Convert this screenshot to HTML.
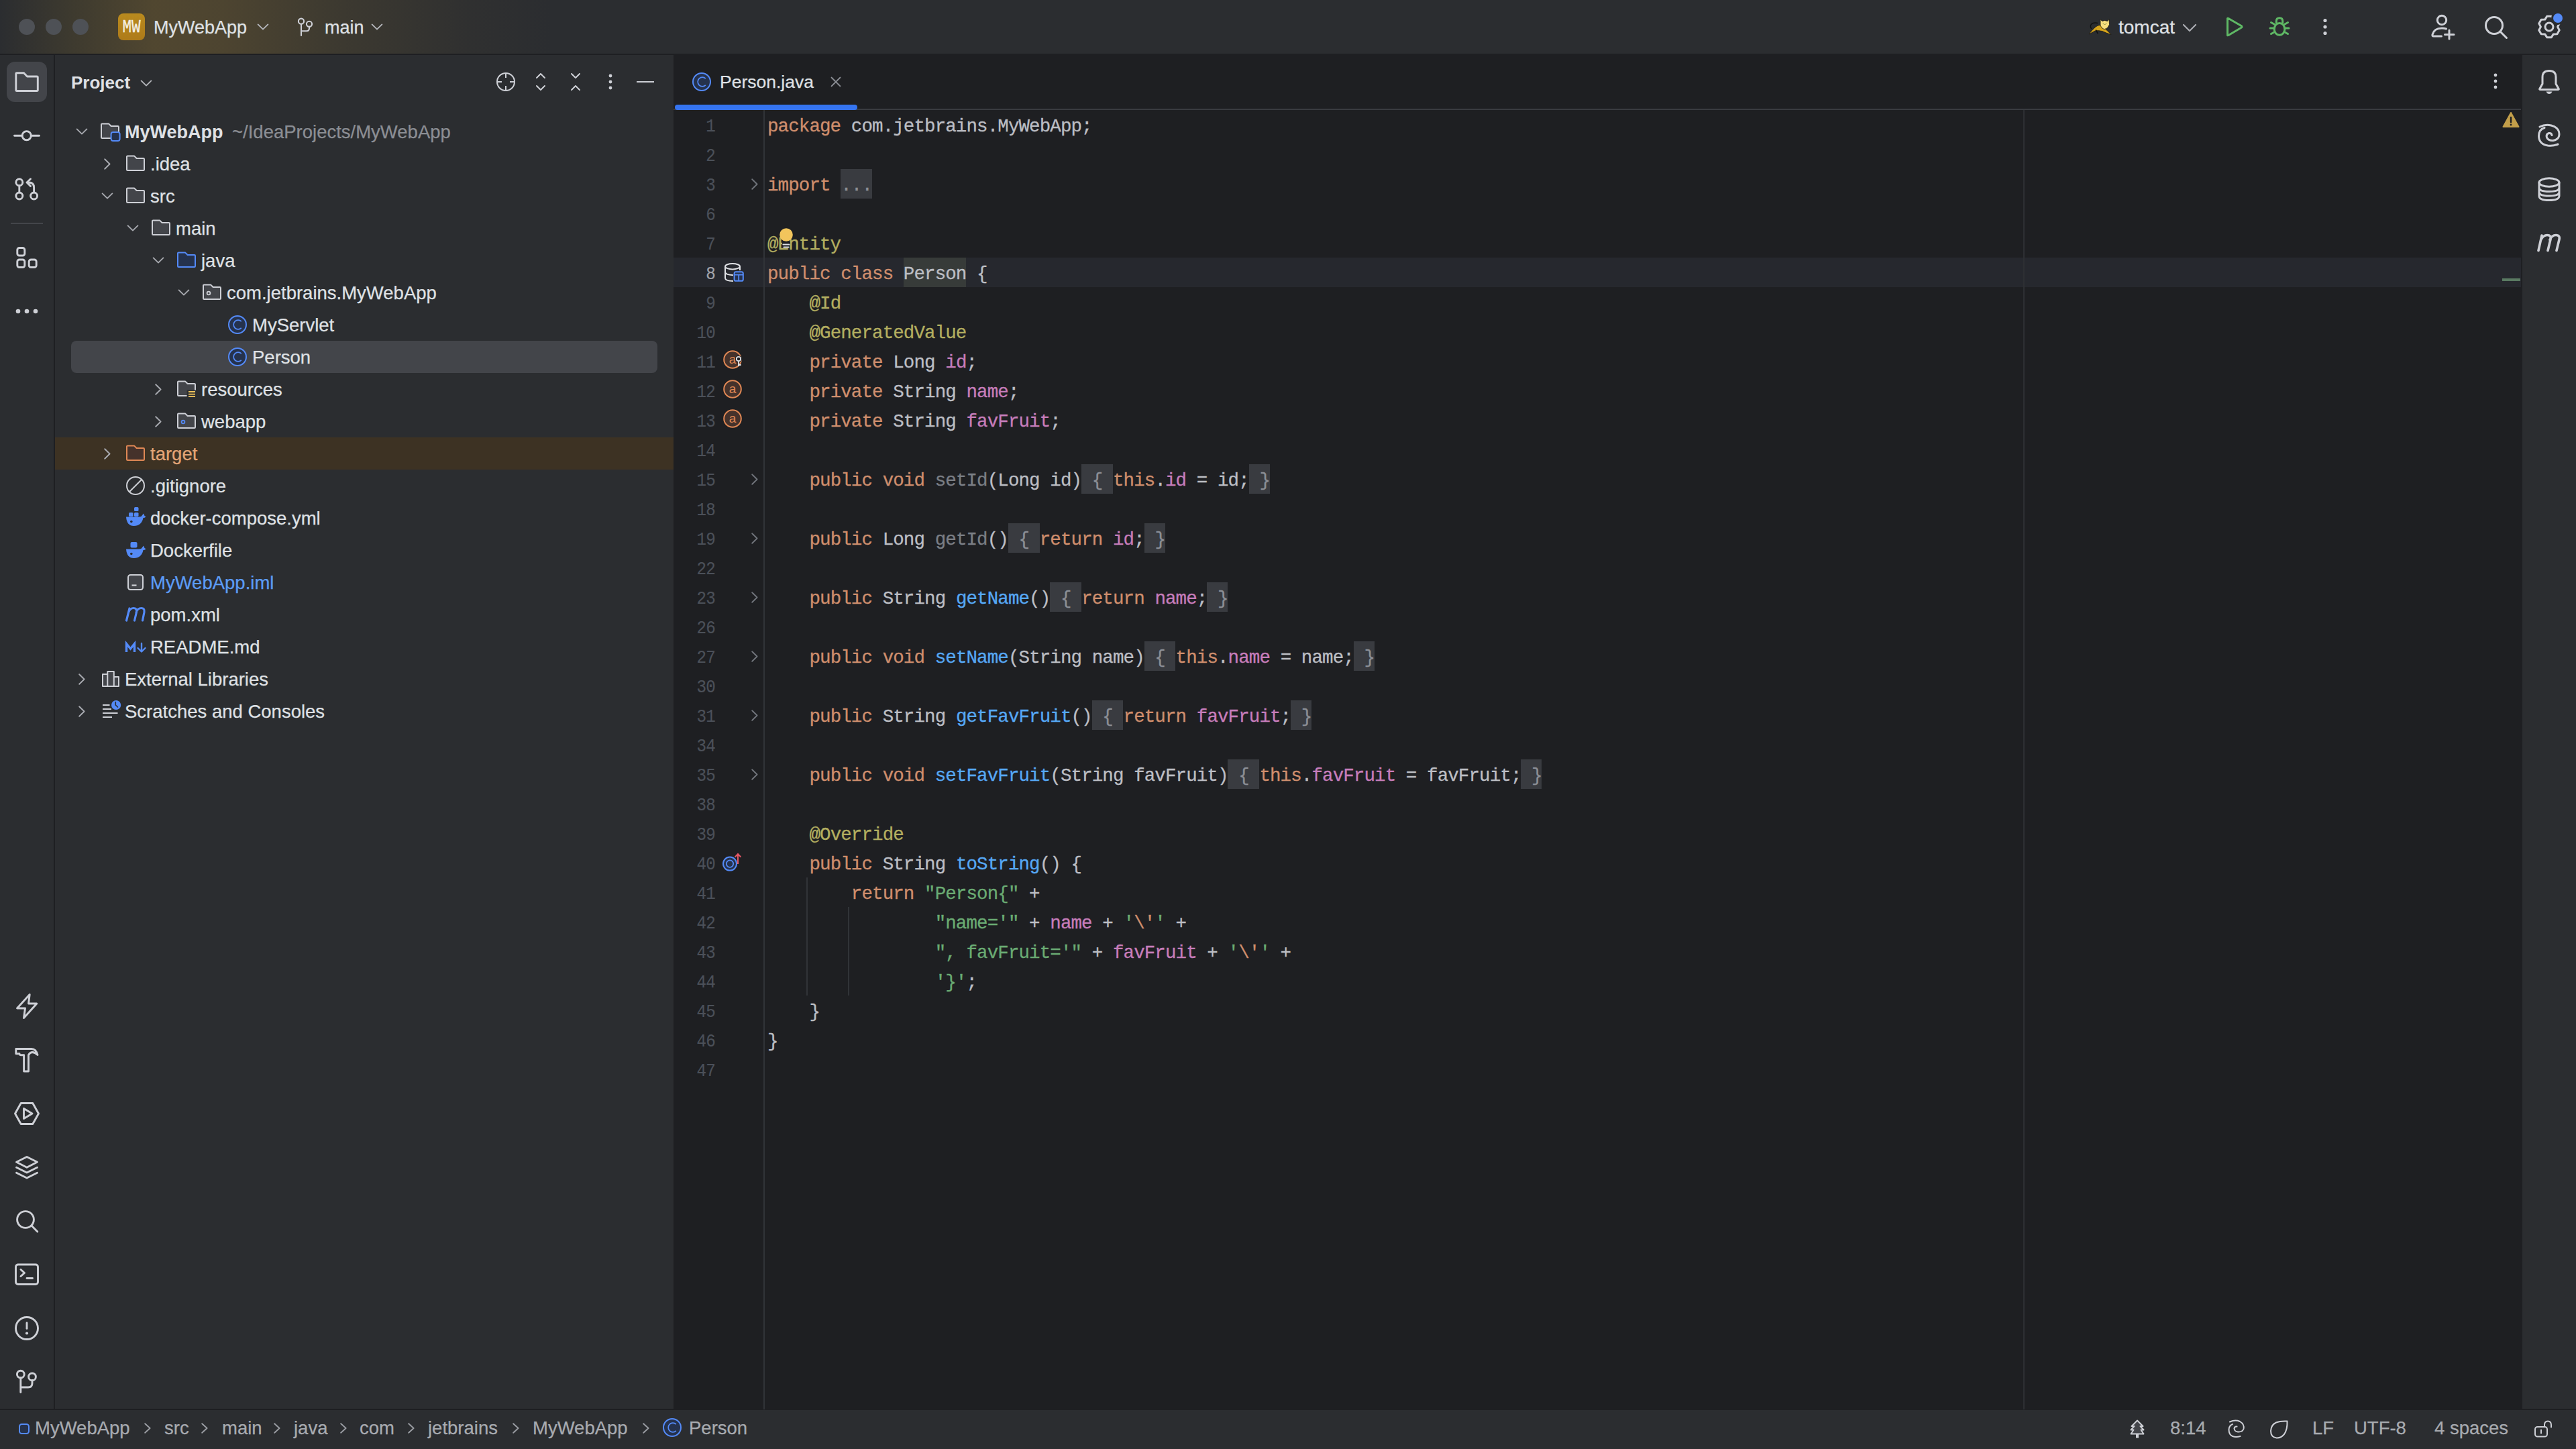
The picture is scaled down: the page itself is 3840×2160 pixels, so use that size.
<!DOCTYPE html><html><head><meta charset="utf-8"><style>
*{margin:0;padding:0;box-sizing:border-box}
html,body{width:3840px;height:2160px;overflow:hidden;background:#2b2d30;font-family:"Liberation Sans", sans-serif;color:#dfe1e5}
.abs{position:absolute}
#title{position:absolute;left:0;top:0;width:3840px;height:80px;background:#2b2d30;overflow:hidden}
#tb{position:absolute;left:0;top:80px;width:3840px;height:2px;background:#1e1f22}
#ltool{position:absolute;left:0;top:82px;width:80px;height:2019px;background:#2b2d30}
#lb{position:absolute;left:80px;top:82px;width:2px;height:2019px;background:#1e1f22}
#proj{position:absolute;left:82px;top:82px;width:922px;height:2019px;background:#2b2d30;overflow:hidden}
#editor{position:absolute;left:1004px;top:82px;width:2754px;height:2019px;background:#1e1f22;overflow:hidden}
#rb{position:absolute;left:3758px;top:82px;width:2px;height:2019px;background:#1e1f22}
#rtool{position:absolute;left:3760px;top:82px;width:80px;height:2019px;background:#2b2d30}
#status{position:absolute;left:0;top:2102px;width:3840px;height:58px;background:#2b2d30}
#sb{position:absolute;left:0;top:2100px;width:3840px;height:2px;background:#1e1f22}
.t{position:absolute;white-space:pre;font-size:27px;line-height:48px;height:48px;-webkit-text-stroke:0.25px currentColor}
.code{position:absolute;white-space:pre;font-family:"Liberation Mono", monospace;font-size:27.5px;letter-spacing:-0.9px;line-height:44px;height:44px;color:#bcbec4;-webkit-text-stroke:0.3px currentColor}
.ln{position:absolute;white-space:pre;font-family:"Liberation Mono", monospace;font-size:27.5px;letter-spacing:-0.9px;line-height:44px;height:44px;text-align:right;color:#4b5059;width:80px;transform:scaleX(0.88);transform-origin:100% 50%;-webkit-text-stroke:0.2px currentColor}
.kw{color:#cf8e6d} .an{color:#b3ae60} .fd{color:#c77dbb} .md{color:#56a8f5} .st{color:#6aab73} .gr{color:#7a7e85}
.fold{color:#8c8f96}
svg{position:absolute;overflow:visible}
</style></head><body><div id="title">
<div class="abs" style="left:0;top:0;width:1000px;height:80px;background:linear-gradient(90deg, rgba(43,45,48,0) 0px, rgba(90,78,45,0.4) 110px, rgba(100,84,48,0.66) 230px, rgba(100,84,48,0.6) 330px, rgba(90,78,48,0.38) 500px, rgba(80,70,48,0.12) 700px, rgba(43,45,48,0) 820px)"></div>
<div class="abs" style="left:28px;top:28px;width:24px;height:24px;border-radius:50%;background:#4e5156"></div>
<div class="abs" style="left:68px;top:28px;width:24px;height:24px;border-radius:50%;background:#4e5156"></div>
<div class="abs" style="left:108px;top:28px;width:24px;height:24px;border-radius:50%;background:#4e5156"></div>
<div class="abs" style="left:176px;top:20px;width:40px;height:40px;border-radius:8px;background:linear-gradient(180deg,#b98a1e,#ae7b1a)"></div>
<div class="abs" style="left:176px;top:20px;width:40px;height:40px;font-family:'Liberation Mono',monospace;font-size:27px;line-height:43px;text-align:center;color:#f4efe2;transform:scaleX(0.84);-webkit-text-stroke:0.3px #f4efe2">MW</div>
<div class="t" style="left:229px;top:17px;color:#dfe1e5">MyWebApp</div>
<svg style="left:383px;top:35px" width="18" height="10" viewBox="0 0 18 10" fill="none" ><path d="M1.6 1.4 L9 8.6 L16.4 1.4" stroke="#b4b6bb" stroke-width="1.9" stroke-linecap="round" stroke-linejoin="round"/></svg>
<svg style="left:436px;top:20px" width="40" height="40" viewBox="436 20 40 40" fill="none"><circle cx="449" cy="31.7" r="4.1" stroke="#ced0d6" stroke-width="2.1"/><circle cx="461" cy="35.8" r="4.1" stroke="#ced0d6" stroke-width="2.1"/><path d="M449 35.8 V53 M449 46.2 H457 Q461 46.2 461 42 V39.9" stroke="#ced0d6" stroke-width="2.1" stroke-linecap="round"/></svg>
<div class="t" style="left:484px;top:17px;color:#dfe1e5">main</div>
<svg style="left:553px;top:35px" width="18" height="10" viewBox="0 0 18 10" fill="none" ><path d="M1.6 1.4 L9 8.6 L16.4 1.4" stroke="#b4b6bb" stroke-width="1.9" stroke-linecap="round" stroke-linejoin="round"/></svg>
<svg style="left:3106px;top:20px" width="46" height="40" viewBox="3106 20 46 40" fill="none"><path d="M3127 34.5 Q3121 33 3117.5 36 Q3115 39.5 3117.8 43" stroke="#111" stroke-width="1.4" fill="none"/><path d="M3114 51 Q3118.5 44.5 3124 40 Q3128 37 3131 37.5 L3136 41 Q3141 45 3147 51.5 Q3140 49.5 3134 46.5 Q3127 45 3123 46 Q3118.5 48.5 3114 51 Z" fill="#d6a41c" stroke="#111" stroke-width="0.7" stroke-linejoin="round"/><path d="M3124.5 45 L3127 49.5" stroke="#111" stroke-width="1.6" stroke-linecap="round"/><path d="M3131 28.5 L3133.5 31.5 L3137.5 30.5 L3141.5 31.5 L3144 28.5 L3144.5 36.5 Q3142 43 3137.5 43.5 Q3133 43 3131 37.5 Z" fill="#f7df7e" stroke="#111" stroke-width="0.8" stroke-linejoin="round"/><path d="M3134.5 34.5 Q3137.5 38.5 3140.5 34.5" stroke="#6b7a3a" stroke-width="0.7" fill="none"/></svg>
<div class="t" style="left:3158px;top:17px;color:#dfe1e5;font-size:28px">tomcat</div>
<svg style="left:3250px;top:30px" width="30" height="20" viewBox="3250 30 30 20" fill="none"><path d="M3255 37 L3264 46 L3273 37" stroke="#a9abb0" stroke-width="2.2" stroke-linecap="round" stroke-linejoin="round"/></svg>
<svg style="left:3310px;top:20px" width="40" height="40" viewBox="3310 20 40 40" fill="none"><path d="M3320.5 28.5 Q3320 26.5 3322 27.5 L3341 38.5 Q3343 40 3341 41.3 L3322 52.5 Q3320 53.5 3320.5 51.5 Z" stroke="#5fb865" stroke-width="3" stroke-linecap="round" stroke-linejoin="round"/></svg>
<svg style="left:3378px;top:20px" width="40" height="40" viewBox="3378 20 40 40" fill="none"><ellipse cx="3398" cy="43.4" rx="7.8" ry="8.9" stroke="#5fb865" stroke-width="3"/><path d="M3393.3 34 V31.5 Q3393.3 26.7 3398 26.7 Q3402.7 26.7 3402.7 31.5 V34" stroke="#5fb865" stroke-width="3" stroke-linecap="round" stroke-linejoin="round"/><path d="M3385.5 33.5 L3390 36 M3410.5 33.5 L3406 36 M3384 42 H3389 M3412 42 H3407 M3385.5 50.5 L3390 48 M3410.5 50.5 L3406 48" stroke="#5fb865" stroke-width="3" stroke-linecap="round" stroke-linejoin="round"/></svg>
<svg style="left:3450px;top:20px" width="32" height="40" viewBox="3450 20 32 40" fill="none"><circle cx="3466" cy="30.5" r="2.6" fill="#ced0d6"/><circle cx="3466" cy="40" r="2.6" fill="#ced0d6"/><circle cx="3466" cy="49.5" r="2.6" fill="#ced0d6"/></svg>
<svg style="left:3620px;top:18px" width="46" height="46" viewBox="3620 18 46 46" fill="none"><circle cx="3640" cy="30" r="6.7" stroke="#ced0d6" stroke-width="3"/><path d="M3639.5 54 H3627.5 Q3625.5 54 3626 51.5 Q3628.5 42 3640 42 Q3644 42 3646.5 43" stroke="#ced0d6" stroke-width="3" stroke-linecap="round" stroke-linejoin="round"/><path d="M3651 45 V58 M3644.5 51.5 H3658" stroke="#ced0d6" stroke-width="3" stroke-linecap="round" stroke-linejoin="round"/></svg>
<svg style="left:3700px;top:20px" width="42" height="42" viewBox="3700 20 42 42" fill="none"><circle cx="3718" cy="38" r="12.5" stroke="#ced0d6" stroke-width="3"/><path d="M3727.5 47.5 L3736.5 56.5" stroke="#ced0d6" stroke-width="3" stroke-linecap="round" stroke-linejoin="round"/></svg>
<svg style="left:3776px;top:16px" width="48" height="48" viewBox="3776 16 48 48" fill="none"><path d="M3796.67 24.35 L3803.33 24.35 L3806.30 29.09 L3811.89 29.29 L3815.22 35.06 L3812.60 40.00 L3815.22 44.94 L3811.89 50.71 L3806.30 50.91 L3803.33 55.65 L3796.67 55.65 L3793.70 50.91 L3788.11 50.71 L3784.78 44.94 L3787.40 40.00 L3784.78 35.06 L3788.11 29.29 L3793.70 29.09 Z" stroke="#ced0d6" stroke-width="3" stroke-linecap="round" stroke-linejoin="round"/><circle cx="3800" cy="40" r="6" stroke="#ced0d6" stroke-width="3"/></svg>
<div class="abs" style="left:3806px;top:20px;width:14px;height:14px;border-radius:50%;background:#548af7;box-shadow:0 0 0 3px #2b2d30"></div>
</div>
<div id="tb"></div>
<div id="ltool">
<div class="abs" style="left:10px;top:10px;width:60px;height:60px;border-radius:12px;background:#43454a"></div>
</div><div id="lb"></div>
<svg style="left:16px;top:100px" width="48" height="44" viewBox="16 100 48 44" fill="none"><path d="M23.8 110 Q23.8 108.8 25 108.8 H35.5 L40.5 114 H55 Q56.3 114 56.3 115.3 V134.2 Q56.3 135.5 55 135.5 H25 Q23.8 135.5 23.8 134.2 Z" stroke="#ced0d6" stroke-width="2.9" stroke-linecap="round" stroke-linejoin="round"/></svg>
<svg style="left:16px;top:186px" width="48" height="32" viewBox="16 186 48 32" fill="none"><circle cx="39.7" cy="202.2" r="6.6" stroke="#ced0d6" stroke-width="2.9" stroke-linecap="round" stroke-linejoin="round"/><path d="M21.5 202.2 H33 M46.4 202.2 H58.5" stroke="#ced0d6" stroke-width="2.9" stroke-linecap="round" stroke-linejoin="round"/></svg>
<svg style="left:16px;top:258px" width="48" height="44" viewBox="16 258 48 44" fill="none"><circle cx="28.8" cy="271.8" r="5" stroke="#ced0d6" stroke-width="2.9" stroke-linecap="round" stroke-linejoin="round"/><circle cx="28.8" cy="292" r="5" stroke="#ced0d6" stroke-width="2.9" stroke-linecap="round" stroke-linejoin="round"/><circle cx="50.6" cy="292" r="5" stroke="#ced0d6" stroke-width="2.9" stroke-linecap="round" stroke-linejoin="round"/><path d="M28.8 276.8 V287 M50.6 287 V279.5 Q50.6 272 43 272 H40 M45.5 266.8 L40 272 L45.5 277.4" stroke="#ced0d6" stroke-width="2.9" stroke-linecap="round" stroke-linejoin="round"/></svg>
<div class="abs" style="left:16px;top:332px;width:48px;height:2px;background:#43454a"></div>
<svg style="left:16px;top:360px" width="48" height="48" viewBox="16 360 48 48" fill="none"><rect x="25.8" y="369.5" width="11" height="11.5" rx="3" stroke="#ced0d6" stroke-width="2.9" stroke-linecap="round" stroke-linejoin="round"/><rect x="25.8" y="387" width="11" height="11.5" rx="3" stroke="#ced0d6" stroke-width="2.9" stroke-linecap="round" stroke-linejoin="round"/><rect x="43.2" y="387" width="11" height="11.5" rx="3" stroke="#ced0d6" stroke-width="2.9" stroke-linecap="round" stroke-linejoin="round"/></svg>
<svg style="left:16px;top:450px" width="48" height="28" viewBox="16 450 48 28" fill="none"><circle cx="27" cy="464" r="3.3" fill="#ced0d6"/><circle cx="40" cy="464" r="3.3" fill="#ced0d6"/><circle cx="53" cy="464" r="3.3" fill="#ced0d6"/></svg>
<svg style="left:16px;top:1476px" width="48" height="48" viewBox="16 1476 48 48" fill="none"><path d="M44.2 1482.5 L25.5 1503 H37.5 L35.5 1517.5 L54.8 1496 H42.5 Z" stroke="#ced0d6" stroke-width="2.9" stroke-linecap="round" stroke-linejoin="round"/></svg>
<svg style="left:16px;top:1556px" width="48" height="48" viewBox="16 1556 48 48" fill="none"><path d="M23.8 1563.5 H47 Q53.5 1563.5 56 1572.5 Q52 1568.5 48 1568.5 Q44.5 1569 42.5 1572.8 V1597 H35.6 V1572.8 H31.5 Q29 1572.8 29 1570.8 H23.8 Z" stroke="#ced0d6" stroke-width="2.9" stroke-linecap="round" stroke-linejoin="round"/></svg>
<svg style="left:16px;top:1636px" width="48" height="48" viewBox="16 1636 48 48" fill="none"><path d="M31.2 1644.5 H48.8 L57.5 1660 L48.8 1675.5 H31.2 L22.5 1660 Z" stroke="#ced0d6" stroke-width="2.9" stroke-linecap="round" stroke-linejoin="round"/><path d="M35.5 1652.5 L48 1660 L35.5 1667.5 Z" stroke="#ced0d6" stroke-width="2.9" stroke-linecap="round" stroke-linejoin="round"/></svg>
<svg style="left:16px;top:1716px" width="48" height="48" viewBox="16 1716 48 48" fill="none"><path d="M40 1724.5 L55.5 1732.3 L40 1740.2 L24.5 1732.3 Z M24.5 1740.3 L40 1748 L55.5 1740.3 M24.5 1748.3 L40 1756 L55.5 1748.3" stroke="#ced0d6" stroke-width="2.9" stroke-linecap="round" stroke-linejoin="round"/></svg>
<svg style="left:16px;top:1796px" width="48" height="48" viewBox="16 1796 48 48" fill="none"><circle cx="38" cy="1818" r="12.4" stroke="#ced0d6" stroke-width="2.9" stroke-linecap="round" stroke-linejoin="round"/><path d="M47 1827 L55.8 1836" stroke="#ced0d6" stroke-width="2.9" stroke-linecap="round" stroke-linejoin="round"/></svg>
<svg style="left:16px;top:1876px" width="48" height="48" viewBox="16 1876 48 48" fill="none"><rect x="23.5" y="1885" width="33" height="29.5" rx="3.5" stroke="#ced0d6" stroke-width="2.9" stroke-linecap="round" stroke-linejoin="round"/><path d="M31 1892.5 L36.5 1897.5 L31 1902.5 M40 1905.5 H48.5" stroke="#ced0d6" stroke-width="2.9" stroke-linecap="round" stroke-linejoin="round"/></svg>
<svg style="left:16px;top:1956px" width="48" height="48" viewBox="16 1956 48 48" fill="none"><circle cx="40" cy="1980" r="16.5" stroke="#ced0d6" stroke-width="2.9" stroke-linecap="round" stroke-linejoin="round"/><path d="M40 1972 V1980.5" stroke="#ced0d6" stroke-width="2.9" stroke-linecap="round" stroke-linejoin="round"/><circle cx="40" cy="1987.5" r="2.1" fill="#ced0d6"/></svg>
<svg style="left:16px;top:2036px" width="48" height="48" viewBox="16 2036 48 48" fill="none"><circle cx="30.8" cy="2048.6" r="5.4" stroke="#ced0d6" stroke-width="2.9" stroke-linecap="round" stroke-linejoin="round"/><circle cx="48" cy="2052.4" r="5.4" stroke="#ced0d6" stroke-width="2.9" stroke-linecap="round" stroke-linejoin="round"/><path d="M30.8 2054 V2075.5 M30.8 2068 H42 Q48 2068 48 2062 V2057.8" stroke="#ced0d6" stroke-width="2.9" stroke-linecap="round" stroke-linejoin="round"/></svg>
<div id="proj">
</div>
<div class="t" style="left:106px;top:99px;font-weight:bold;font-size:26px;-webkit-text-stroke:0">Project</div>
<svg style="left:209px;top:119px" width="18" height="10" viewBox="0 0 18 10" fill="none" ><path d="M1.6 1.4 L9 8.6 L16.4 1.4" stroke="#b4b6bb" stroke-width="1.9" stroke-linecap="round" stroke-linejoin="round"/></svg>
<svg style="left:738px;top:106px" width="32" height="32" viewBox="0 0 16.0 16.0" fill="none" ><circle cx="8" cy="8" r="6.5" stroke="#ced0d6" stroke-width="1"/><path d="M8 1.5 V5 M8 11 V14.5 M1.5 8 H5 M11 8 H14.5" stroke="#ced0d6" stroke-width="1"/></svg>
<svg style="left:790px;top:106px" width="32" height="32" viewBox="0 0 16.0 16.0" fill="none" ><path d="M5 5 L8 2 L11 5 M5 11 L8 14 L11 11" stroke="#ced0d6" stroke-width="1" stroke-linecap="round" stroke-linejoin="round"/></svg>
<svg style="left:842px;top:106px" width="32" height="32" viewBox="0 0 16.0 16.0" fill="none" ><path d="M5 2 L8 5 L11 2 M5 14 L8 11 L11 14" stroke="#ced0d6" stroke-width="1" stroke-linecap="round" stroke-linejoin="round"/></svg>
<svg style="left:894px;top:106px" width="32" height="32" viewBox="0 0 16.0 16.0" fill="none" ><circle cx="8" cy="3.5" r="1.2" fill="#ced0d6"/><circle cx="8" cy="8" r="1.2" fill="#ced0d6"/><circle cx="8" cy="12.5" r="1.2" fill="#ced0d6"/></svg>
<div class="abs" style="left:949px;top:121px;width:26px;height:2px;background:#ced0d6"></div>
<div class="abs" style="left:106px;top:508px;width:874px;height:48px;border-radius:8px;background:#43454a"></div>
<div class="abs" style="left:82px;top:652px;width:922px;height:48px;background:#3d3223"></div>
<svg style="left:113px;top:191px" width="18" height="10" viewBox="0 0 18 10" fill="none" ><path d="M1.6 1.4 L9 8.6 L16.4 1.4" stroke="#a8aab0" stroke-width="1.9" stroke-linecap="round" stroke-linejoin="round"/></svg>
<svg style="left:148px;top:180px" width="32" height="32" viewBox="0 0 16.0 16.0" fill="none" ><path d="M1.5 2.8 Q1.5 2.2 2.1 2.2 H7 L8.8 4 H13.9 Q14.5 4 14.5 4.6 V12.4 Q14.5 13 13.9 13 H2.1 Q1.5 13 1.5 12.4 Z" stroke="#ced0d6" fill="#43454a" stroke-width="1" stroke-linejoin="round"/><rect x="8.8" y="8.5" width="6.5" height="6.5" rx="1.5" fill="#25324d" stroke="#548af7" stroke-width="1"/></svg>
<div class="t" style="left:186px;top:173px;font-weight:bold;color:#dfe1e5;-webkit-text-stroke:0">MyWebApp <span style="font-weight:normal;color:#8b8e94;font-size:27.5px;margin-left:6px;-webkit-text-stroke:0.25px currentColor">~/IdeaProjects/MyWebApp</span></div>
<svg style="left:155px;top:236px" width="10" height="17" viewBox="0 0 10 17" fill="none" ><path d="M1.2 1.2 L8.6 8.5 L1.2 15.8" stroke="#a8aab0" stroke-width="1.9" stroke-linecap="round" stroke-linejoin="round"/></svg>
<svg style="left:186px;top:228px" width="32" height="32" viewBox="0 0 16.0 16.0" fill="none" ><path d="M1.5 2.8 Q1.5 2.2 2.1 2.2 H7 L8.8 4 H13.9 Q14.5 4 14.5 4.6 V12.4 Q14.5 13 13.9 13 H2.1 Q1.5 13 1.5 12.4 Z" stroke="#ced0d6" fill="#43454a" stroke-width="1" stroke-linejoin="round"/></svg>
<div class="t" style="left:224px;top:221px;color:#dfe1e5;font-size:27.5px">.idea</div>
<svg style="left:151px;top:287px" width="18" height="10" viewBox="0 0 18 10" fill="none" ><path d="M1.6 1.4 L9 8.6 L16.4 1.4" stroke="#a8aab0" stroke-width="1.9" stroke-linecap="round" stroke-linejoin="round"/></svg>
<svg style="left:186px;top:276px" width="32" height="32" viewBox="0 0 16.0 16.0" fill="none" ><path d="M1.5 2.8 Q1.5 2.2 2.1 2.2 H7 L8.8 4 H13.9 Q14.5 4 14.5 4.6 V12.4 Q14.5 13 13.9 13 H2.1 Q1.5 13 1.5 12.4 Z" stroke="#ced0d6" fill="#43454a" stroke-width="1" stroke-linejoin="round"/></svg>
<div class="t" style="left:224px;top:269px;color:#dfe1e5;font-size:27.5px">src</div>
<svg style="left:189px;top:335px" width="18" height="10" viewBox="0 0 18 10" fill="none" ><path d="M1.6 1.4 L9 8.6 L16.4 1.4" stroke="#a8aab0" stroke-width="1.9" stroke-linecap="round" stroke-linejoin="round"/></svg>
<svg style="left:224px;top:324px" width="32" height="32" viewBox="0 0 16.0 16.0" fill="none" ><path d="M1.5 2.8 Q1.5 2.2 2.1 2.2 H7 L8.8 4 H13.9 Q14.5 4 14.5 4.6 V12.4 Q14.5 13 13.9 13 H2.1 Q1.5 13 1.5 12.4 Z" stroke="#ced0d6" fill="#43454a" stroke-width="1" stroke-linejoin="round"/></svg>
<div class="t" style="left:262px;top:317px;color:#dfe1e5;font-size:27.5px">main</div>
<svg style="left:227px;top:383px" width="18" height="10" viewBox="0 0 18 10" fill="none" ><path d="M1.6 1.4 L9 8.6 L16.4 1.4" stroke="#a8aab0" stroke-width="1.9" stroke-linecap="round" stroke-linejoin="round"/></svg>
<svg style="left:262px;top:372px" width="32" height="32" viewBox="0 0 16.0 16.0" fill="none" ><path d="M1.5 2.8 Q1.5 2.2 2.1 2.2 H7 L8.8 4 H13.9 Q14.5 4 14.5 4.6 V12.4 Q14.5 13 13.9 13 H2.1 Q1.5 13 1.5 12.4 Z" stroke="#548af7" fill="#25324d" stroke-width="1" stroke-linejoin="round"/></svg>
<div class="t" style="left:300px;top:365px;color:#dfe1e5;font-size:27.5px">java</div>
<svg style="left:265px;top:431px" width="18" height="10" viewBox="0 0 18 10" fill="none" ><path d="M1.6 1.4 L9 8.6 L16.4 1.4" stroke="#a8aab0" stroke-width="1.9" stroke-linecap="round" stroke-linejoin="round"/></svg>
<svg style="left:300px;top:420px" width="32" height="32" viewBox="0 0 16.0 16.0" fill="none" ><path d="M1.5 2.8 Q1.5 2.2 2.1 2.2 H7 L8.8 4 H13.9 Q14.5 4 14.5 4.6 V12.4 Q14.5 13 13.9 13 H2.1 Q1.5 13 1.5 12.4 Z" stroke="#ced0d6" fill="#43454a" stroke-width="1" stroke-linejoin="round"/><circle cx="5.5" cy="8.5" r="1.2" stroke="#ced0d6" stroke-width="0.9"/></svg>
<div class="t" style="left:338px;top:413px;color:#dfe1e5;font-size:27.5px">com.jetbrains.MyWebApp</div>
<svg style="left:338px;top:468px" width="32" height="32" viewBox="0 0 16.0 16.0" fill="none" ><circle cx="8" cy="8" r="6.5" stroke="#548af7" fill="#25324d" stroke-width="1"/><path d="M10.9 5.6 A3.4 3.4 0 1 0 10.9 10.4" stroke="#548af7" stroke-width="0.85" fill="none"/></svg>
<div class="t" style="left:376px;top:461px;color:#dfe1e5;font-size:27.5px">MyServlet</div>
<svg style="left:338px;top:516px" width="32" height="32" viewBox="0 0 16.0 16.0" fill="none" ><circle cx="8" cy="8" r="6.5" stroke="#548af7" fill="#25324d" stroke-width="1"/><path d="M10.9 5.6 A3.4 3.4 0 1 0 10.9 10.4" stroke="#548af7" stroke-width="0.85" fill="none"/></svg>
<div class="t" style="left:376px;top:509px;color:#dfe1e5;font-size:27.5px">Person</div>
<svg style="left:231px;top:572px" width="10" height="17" viewBox="0 0 10 17" fill="none" ><path d="M1.2 1.2 L8.6 8.5 L1.2 15.8" stroke="#a8aab0" stroke-width="1.9" stroke-linecap="round" stroke-linejoin="round"/></svg>
<svg style="left:262px;top:564px" width="32" height="32" viewBox="0 0 16.0 16.0" fill="none" ><path d="M1.5 2.8 Q1.5 2.2 2.1 2.2 H7 L8.8 4 H13.9 Q14.5 4 14.5 4.6 V12.4 Q14.5 13 13.9 13 H2.1 Q1.5 13 1.5 12.4 Z" stroke="#ced0d6" fill="#43454a" stroke-width="1" stroke-linejoin="round"/><rect x="8.3" y="8.8" width="7" height="6.2" fill="#2b2d30"/><path d="M9.5 10 H14.5 M9.5 11.8 H14.5 M9.5 13.6 H14.5" stroke="#f2c55c" stroke-width="0.9"/></svg>
<div class="t" style="left:300px;top:557px;color:#dfe1e5;font-size:27.5px">resources</div>
<svg style="left:231px;top:620px" width="10" height="17" viewBox="0 0 10 17" fill="none" ><path d="M1.2 1.2 L8.6 8.5 L1.2 15.8" stroke="#a8aab0" stroke-width="1.9" stroke-linecap="round" stroke-linejoin="round"/></svg>
<svg style="left:262px;top:612px" width="32" height="32" viewBox="0 0 16.0 16.0" fill="none" ><path d="M1.5 2.8 Q1.5 2.2 2.1 2.2 H7 L8.8 4 H13.9 Q14.5 4 14.5 4.6 V12.4 Q14.5 13 13.9 13 H2.1 Q1.5 13 1.5 12.4 Z" stroke="#ced0d6" fill="#43454a" stroke-width="1" stroke-linejoin="round"/><circle cx="5.5" cy="8.5" r="1.2" stroke="#548af7" stroke-width="0.9"/></svg>
<div class="t" style="left:300px;top:605px;color:#dfe1e5;font-size:27.5px">webapp</div>
<svg style="left:155px;top:668px" width="10" height="17" viewBox="0 0 10 17" fill="none" ><path d="M1.2 1.2 L8.6 8.5 L1.2 15.8" stroke="#a8aab0" stroke-width="1.9" stroke-linecap="round" stroke-linejoin="round"/></svg>
<svg style="left:186px;top:660px" width="32" height="32" viewBox="0 0 16.0 16.0" fill="none" ><path d="M1.5 2.8 Q1.5 2.2 2.1 2.2 H7 L8.8 4 H13.9 Q14.5 4 14.5 4.6 V12.4 Q14.5 13 13.9 13 H2.1 Q1.5 13 1.5 12.4 Z" stroke="#e08855" fill="#45322b" stroke-width="1" stroke-linejoin="round"/></svg>
<div class="t" style="left:224px;top:653px;color:#e3a577;font-size:27.5px">target</div>
<svg style="left:186px;top:708px" width="32" height="32" viewBox="0 0 16.0 16.0" fill="none" ><circle cx="8" cy="8" r="6.5" stroke="#ced0d6" stroke-width="1"/><path d="M3.5 12.5 L12.5 3.5" stroke="#ced0d6" stroke-width="1"/></svg>
<div class="t" style="left:224px;top:701px;color:#dfe1e5;font-size:27.5px">.gitignore</div>
<svg style="left:184px;top:752px" width="40" height="40" viewBox="184 752 40 40" fill="none"><rect x="200" y="756.0" width="6.5" height="6" rx="1.5" fill="#548af7"/><rect x="192" y="764.0" width="6.5" height="6" rx="1.5" fill="#548af7"/><rect x="200" y="764.0" width="6.5" height="6" rx="1.5" fill="#548af7"/><path d="M188 770.5 H207 Q211 770.5 212 768 L214 765.5 L215.5 769 Q217 769.5 217.5 770.5 Q215.5 772 213.5 772 Q211 784 199.5 784 Q189 784 188 770.5 Z" fill="#548af7"/><circle cx="195.8" cy="777.5" r="1.8" fill="#2b2d30"/></svg>
<div class="t" style="left:224px;top:749px;color:#dfe1e5;font-size:27.5px">docker-compose.yml</div>
<svg style="left:184px;top:800px" width="40" height="40" viewBox="184 800 40 40" fill="none"><rect x="194.5" y="808.0" width="10" height="8.5" rx="2" fill="#548af7"/><path d="M188 818.5 H207 Q211 818.5 212 816 L214 813.5 L215.5 817 Q217 817.5 217.5 818.5 Q215.5 820 213.5 820 Q211 832 199.5 832 Q189 832 188 818.5 Z" fill="#548af7"/><circle cx="195.8" cy="825.5" r="1.8" fill="#2b2d30"/></svg>
<div class="t" style="left:224px;top:797px;color:#dfe1e5;font-size:27.5px">Dockerfile</div>
<svg style="left:184px;top:848px" width="40" height="40" viewBox="184 848 40 40" fill="none"><rect x="191" y="857" width="22" height="22" rx="3.5" fill="#43454a" stroke="#ced0d6" stroke-width="2"/><path d="M196.5 872.5 H203.5" stroke="#ced0d6" stroke-width="2.2"/></svg>
<div class="t" style="left:224px;top:845px;color:#5c9cf6;font-size:27.5px">MyWebApp.iml</div>
<svg style="left:184px;top:900px" width="40" height="32" viewBox="184 900 40 32" fill="none"><path d="M188.5 925 L193 907 M191.5 913 Q194 906.5 199 906.5 Q204.5 906.5 203.5 912.5 L200.5 925 M203 912.5 Q205.5 906.5 210.5 906.5 Q216 906.5 215 912.5 L212.5 925" stroke="#548af7" stroke-width="3.2" stroke-linecap="round" stroke-linejoin="round"/></svg>
<div class="t" style="left:224px;top:893px;color:#dfe1e5;font-size:27.5px">pom.xml</div>
<svg style="left:184px;top:948px" width="40" height="32" viewBox="184 948 40 32" fill="none"><path d="M188.5 972 V959.5 L194.5 967 L200.5 959.5 V972" stroke="#548af7" stroke-width="3.4" stroke-linejoin="miter"/><path d="M211 959 V971 M205.5 966 L211 971.5 L216.5 966" stroke="#548af7" stroke-width="2.4" stroke-linecap="round" stroke-linejoin="round"/></svg>
<div class="t" style="left:224px;top:941px;color:#dfe1e5;font-size:27.5px">README.md</div>
<svg style="left:117px;top:1004px" width="10" height="17" viewBox="0 0 10 17" fill="none" ><path d="M1.2 1.2 L8.6 8.5 L1.2 15.8" stroke="#a8aab0" stroke-width="1.9" stroke-linecap="round" stroke-linejoin="round"/></svg>
<svg style="left:144px;top:996px" width="40" height="32" viewBox="144 996 40 32" fill="none"><path d="M153 1023 V1005 H160.3 V1023 Z M160.3 1023 V1001 H169.8 V1023 Z M169.8 1023 V1009 H177 V1023 Z" fill="#43454a" stroke="#ced0d6" stroke-width="2" stroke-linejoin="round"/></svg>
<div class="t" style="left:186px;top:989px;color:#dfe1e5;font-size:27.5px">External Libraries</div>
<svg style="left:117px;top:1052px" width="10" height="17" viewBox="0 0 10 17" fill="none" ><path d="M1.2 1.2 L8.6 8.5 L1.2 15.8" stroke="#a8aab0" stroke-width="1.9" stroke-linecap="round" stroke-linejoin="round"/></svg>
<svg style="left:144px;top:1040px" width="40" height="40" viewBox="144 1040 40 40" fill="none"><path d="M153 1051 H163.5 M153 1057 H166 M153 1063 H175.5 M153 1069 H167" stroke="#ced0d6" stroke-width="2.2"/><circle cx="173.1" cy="1051" r="8.2" fill="#2b2d30"/><circle cx="173.1" cy="1051" r="7.1" fill="#548af7"/><path d="M172.3 1046.5 V1051 L175.5 1054" stroke="#2b2d30" stroke-width="1.6" stroke-linecap="round"/></svg>
<div class="t" style="left:186px;top:1037px;color:#dfe1e5;font-size:27.5px">Scratches and Consoles</div>
<div id="editor"></div><div id="rb"></div><div id="rtool"></div><div id="sb"></div>
<svg style="left:1030px;top:106px" width="32" height="32" viewBox="0 0 16.0 16.0" fill="none" ><circle cx="8" cy="8" r="6.5" stroke="#548af7" fill="#25324d" stroke-width="1"/><path d="M10.9 5.6 A3.4 3.4 0 1 0 10.9 10.4" stroke="#548af7" stroke-width="0.85" fill="none"/></svg>
<div class="t" style="left:1073px;top:98px;font-size:26.5px;color:#dfe1e5">Person.java</div>
<svg style="left:1237px;top:113px" width="18" height="18" viewBox="0 0 18 18" fill="none" ><path d="M2.6 2.6 L15.4 15.4 M15.4 2.6 L2.6 15.4" stroke="#8c8f96" stroke-width="2" stroke-linecap="round"/></svg>
<div class="abs" style="left:1004px;top:162px;width:2754px;height:2px;background:#393b40"></div>
<div class="abs" style="left:1006px;top:156px;width:272px;height:8px;border-radius:4px;background:#3574f0"></div>
<svg style="left:3704px;top:105px" width="32" height="32" viewBox="0 0 16.0 16.0" fill="none" ><circle cx="8" cy="3.5" r="1.2" fill="#ced0d6"/><circle cx="8" cy="8" r="1.2" fill="#ced0d6"/><circle cx="8" cy="12.5" r="1.2" fill="#ced0d6"/></svg>
<div class="abs" style="left:1004px;top:384px;width:2754px;height:44px;background:#26282e"></div>
<div class="abs" style="left:1138px;top:164px;width:2px;height:1937px;background:#313438"></div>
<div class="abs" style="left:3016px;top:164px;width:2px;height:1937px;background:#2d2f33"></div>
<div class="ln" style="left:986px;top:167px;color:#4b5059">1</div>
<div class="code" style="left:1144px;top:167px"><span class="kw">package</span> com.jetbrains.MyWebApp;</div>
<div class="ln" style="left:986px;top:211px;color:#4b5059">2</div>
<div class="code" style="left:1144px;top:211px"></div>
<div class="ln" style="left:986px;top:255px;color:#4b5059">3</div>
<div class="abs" style="left:1253.2px;top:252px;width:46.8px;height:44px;background:#393b40"></div>
<div class="code" style="left:1144px;top:255px"><span class="kw">import</span> <span class="fold">...</span></div>
<div class="ln" style="left:986px;top:299px;color:#4b5059">6</div>
<div class="code" style="left:1144px;top:299px"></div>
<div class="ln" style="left:986px;top:343px;color:#4b5059">7</div>
<div class="code" style="left:1144px;top:343px"><span class="an">@Entity</span></div>
<div class="ln" style="left:986px;top:387px;color:#a1a3ab">8</div>
<div class="abs" style="left:1346.8px;top:384px;width:93.6px;height:44px;background:#373b39"></div>
<div class="code" style="left:1144px;top:387px"><span class="kw">public</span> <span class="kw">class</span> Person {</div>
<div class="ln" style="left:986px;top:431px;color:#4b5059">9</div>
<div class="code" style="left:1144px;top:431px">    <span class="an">@Id</span></div>
<div class="ln" style="left:986px;top:475px;color:#4b5059">10</div>
<div class="code" style="left:1144px;top:475px">    <span class="an">@GeneratedValue</span></div>
<div class="ln" style="left:986px;top:519px;color:#4b5059">11</div>
<div class="code" style="left:1144px;top:519px">    <span class="kw">private</span> Long <span class="fd">id</span>;</div>
<div class="ln" style="left:986px;top:563px;color:#4b5059">12</div>
<div class="code" style="left:1144px;top:563px">    <span class="kw">private</span> String <span class="fd">name</span>;</div>
<div class="ln" style="left:986px;top:607px;color:#4b5059">13</div>
<div class="code" style="left:1144px;top:607px">    <span class="kw">private</span> String <span class="fd">favFruit</span>;</div>
<div class="ln" style="left:986px;top:651px;color:#4b5059">14</div>
<div class="code" style="left:1144px;top:651px"></div>
<div class="ln" style="left:986px;top:695px;color:#4b5059">15</div>
<div class="abs" style="left:1612.0px;top:692px;width:46.8px;height:44px;background:#393b40"></div>
<div class="abs" style="left:1861.6px;top:692px;width:31.2px;height:44px;background:#393b40"></div>
<div class="code" style="left:1144px;top:695px">    <span class="kw">public</span> <span class="kw">void</span> <span class="gr">setId</span>(Long id)<span class="fold"> { </span><span class="kw">this</span>.<span class="fd">id</span> = id;<span class="fold"> }</span></div>
<div class="ln" style="left:986px;top:739px;color:#4b5059">18</div>
<div class="code" style="left:1144px;top:739px"></div>
<div class="ln" style="left:986px;top:783px;color:#4b5059">19</div>
<div class="abs" style="left:1502.8px;top:780px;width:46.8px;height:44px;background:#393b40"></div>
<div class="abs" style="left:1705.6px;top:780px;width:31.2px;height:44px;background:#393b40"></div>
<div class="code" style="left:1144px;top:783px">    <span class="kw">public</span> Long <span class="gr">getId</span>()<span class="fold"> { </span><span class="kw">return</span> <span class="fd">id</span>;<span class="fold"> }</span></div>
<div class="ln" style="left:986px;top:827px;color:#4b5059">22</div>
<div class="code" style="left:1144px;top:827px"></div>
<div class="ln" style="left:986px;top:871px;color:#4b5059">23</div>
<div class="abs" style="left:1565.2px;top:868px;width:46.8px;height:44px;background:#393b40"></div>
<div class="abs" style="left:1799.2px;top:868px;width:31.2px;height:44px;background:#393b40"></div>
<div class="code" style="left:1144px;top:871px">    <span class="kw">public</span> String <span class="md">getName</span>()<span class="fold"> { </span><span class="kw">return</span> <span class="fd">name</span>;<span class="fold"> }</span></div>
<div class="ln" style="left:986px;top:915px;color:#4b5059">26</div>
<div class="code" style="left:1144px;top:915px"></div>
<div class="ln" style="left:986px;top:959px;color:#4b5059">27</div>
<div class="abs" style="left:1705.6px;top:956px;width:46.8px;height:44px;background:#393b40"></div>
<div class="abs" style="left:2017.6px;top:956px;width:31.2px;height:44px;background:#393b40"></div>
<div class="code" style="left:1144px;top:959px">    <span class="kw">public</span> <span class="kw">void</span> <span class="md">setName</span>(String name)<span class="fold"> { </span><span class="kw">this</span>.<span class="fd">name</span> = name;<span class="fold"> }</span></div>
<div class="ln" style="left:986px;top:1003px;color:#4b5059">30</div>
<div class="code" style="left:1144px;top:1003px"></div>
<div class="ln" style="left:986px;top:1047px;color:#4b5059">31</div>
<div class="abs" style="left:1627.6px;top:1044px;width:46.8px;height:44px;background:#393b40"></div>
<div class="abs" style="left:1924.0px;top:1044px;width:31.2px;height:44px;background:#393b40"></div>
<div class="code" style="left:1144px;top:1047px">    <span class="kw">public</span> String <span class="md">getFavFruit</span>()<span class="fold"> { </span><span class="kw">return</span> <span class="fd">favFruit</span>;<span class="fold"> }</span></div>
<div class="ln" style="left:986px;top:1091px;color:#4b5059">34</div>
<div class="code" style="left:1144px;top:1091px"></div>
<div class="ln" style="left:986px;top:1135px;color:#4b5059">35</div>
<div class="abs" style="left:1830.4px;top:1132px;width:46.8px;height:44px;background:#393b40"></div>
<div class="abs" style="left:2267.2px;top:1132px;width:31.2px;height:44px;background:#393b40"></div>
<div class="code" style="left:1144px;top:1135px">    <span class="kw">public</span> <span class="kw">void</span> <span class="md">setFavFruit</span>(String favFruit)<span class="fold"> { </span><span class="kw">this</span>.<span class="fd">favFruit</span> = favFruit;<span class="fold"> }</span></div>
<div class="ln" style="left:986px;top:1179px;color:#4b5059">38</div>
<div class="code" style="left:1144px;top:1179px"></div>
<div class="ln" style="left:986px;top:1223px;color:#4b5059">39</div>
<div class="code" style="left:1144px;top:1223px">    <span class="an">@Override</span></div>
<div class="ln" style="left:986px;top:1267px;color:#4b5059">40</div>
<div class="code" style="left:1144px;top:1267px">    <span class="kw">public</span> String <span class="md">toString</span>() {</div>
<div class="ln" style="left:986px;top:1311px;color:#4b5059">41</div>
<div class="code" style="left:1144px;top:1311px">        <span class="kw">return</span> <span class="st">&quot;Person{&quot;</span> +</div>
<div class="ln" style="left:986px;top:1355px;color:#4b5059">42</div>
<div class="code" style="left:1144px;top:1355px">                <span class="st">&quot;name=&#x27;&quot;</span> + <span class="fd">name</span> + <span class="st">&#x27;</span><span class="kw">\&#x27;</span><span class="st">&#x27;</span> +</div>
<div class="ln" style="left:986px;top:1399px;color:#4b5059">43</div>
<div class="code" style="left:1144px;top:1399px">                <span class="st">&quot;, favFruit=&#x27;&quot;</span> + <span class="fd">favFruit</span> + <span class="st">&#x27;</span><span class="kw">\&#x27;</span><span class="st">&#x27;</span> +</div>
<div class="ln" style="left:986px;top:1443px;color:#4b5059">44</div>
<div class="code" style="left:1144px;top:1443px">                <span class="st">&#x27;}&#x27;</span>;</div>
<div class="ln" style="left:986px;top:1487px;color:#4b5059">45</div>
<div class="code" style="left:1144px;top:1487px">    }</div>
<div class="ln" style="left:986px;top:1531px;color:#4b5059">46</div>
<div class="code" style="left:1144px;top:1531px">}</div>
<div class="ln" style="left:986px;top:1575px;color:#4b5059">47</div>
<div class="code" style="left:1144px;top:1575px"></div>
<svg style="left:1078px;top:390px" width="32" height="32" viewBox="0 0 16.0 16.0" fill="none" ><ellipse cx="7" cy="3.6" rx="5.5" ry="2.1" stroke="#dfe1e5" stroke-width="1"/><path d="M1.5 3.6 V12.2 Q1.5 14.3 7.5 14.5 M12.5 3.6 V6.5 M1.5 7.8 Q1.5 9.8 7.5 10.1" stroke="#dfe1e5" stroke-width="1"/><rect x="8.3" y="7.6" width="6.6" height="6.8" rx="1.2" fill="#25324d" stroke="#548af7" stroke-width="1"/><path d="M8.3 9.8 H14.9 M11.6 9.8 V14.4" stroke="#548af7" stroke-width="0.9"/></svg>
<svg style="left:1078px;top:522px" width="28" height="28" viewBox="0 0 14 14" fill="none" ><circle cx="7" cy="7" r="6.4" stroke="#e08855" fill="#45322b" stroke-width="1"/><text x="7" y="10.2" text-anchor="middle" font-family="Liberation Sans" font-size="9.5" fill="#e08855">a</text><circle cx="11.5" cy="6.5" r="2.6" fill="#1e1f22"/><circle cx="11.5" cy="6.5" r="1.6" stroke="#dfe1e5" stroke-width="0.9" fill="none"/><path d="M11.5 8.1 V12 M11.5 11 H13.3" stroke="#dfe1e5" stroke-width="0.9"/></svg>
<svg style="left:1078px;top:566px" width="28" height="28" viewBox="0 0 14 14" fill="none" ><circle cx="7" cy="7" r="6.4" stroke="#e08855" fill="#45322b" stroke-width="1"/><text x="7" y="10.2" text-anchor="middle" font-family="Liberation Sans" font-size="9.5" fill="#e08855">a</text></svg>
<svg style="left:1078px;top:610px" width="28" height="28" viewBox="0 0 14 14" fill="none" ><circle cx="7" cy="7" r="6.4" stroke="#e08855" fill="#45322b" stroke-width="1"/><text x="7" y="10.2" text-anchor="middle" font-family="Liberation Sans" font-size="9.5" fill="#e08855">a</text></svg>
<svg style="left:1076px;top:1270px" width="36" height="32" viewBox="0 0 18 16" fill="none" ><circle cx="6" cy="8.8" r="5" stroke="#548af7" fill="#25324d" stroke-width="1"/><circle cx="6" cy="8.8" r="2.6" stroke="#548af7" stroke-width="0.9" fill="#25324d"/><path d="M12 9 V1.5 M9.8 3.8 L12 1.5 L14.2 3.8" stroke="#e55765" stroke-width="1" fill="none"/></svg>
<svg style="left:1160px;top:339px" width="24" height="34" viewBox="0 0 24 34" fill="none" ><circle cx="12" cy="11" r="9.8" fill="#f2c55c"/><path d="M6 24 H18 M7 28 H17" stroke="#1e1f22" stroke-width="4"/><path d="M7.5 25.5 H16.5 M8.5 29.5 H15.5" stroke="#dfe1e5" stroke-width="2.2" stroke-linecap="round"/></svg>
<div class="abs" style="left:1202px;top:1308px;width:2px;height:176px;background:#313438"></div>
<div class="abs" style="left:1264px;top:1352px;width:2px;height:132px;background:#313438"></div>
<svg style="left:1120px;top:266px" width="10" height="17" viewBox="0 0 10 17" fill="none" ><path d="M1.2 1.2 L8.6 8.5 L1.2 15.8" stroke="#6f737a" stroke-width="1.9" stroke-linecap="round" stroke-linejoin="round"/></svg>
<svg style="left:1120px;top:706px" width="10" height="17" viewBox="0 0 10 17" fill="none" ><path d="M1.2 1.2 L8.6 8.5 L1.2 15.8" stroke="#6f737a" stroke-width="1.9" stroke-linecap="round" stroke-linejoin="round"/></svg>
<svg style="left:1120px;top:794px" width="10" height="17" viewBox="0 0 10 17" fill="none" ><path d="M1.2 1.2 L8.6 8.5 L1.2 15.8" stroke="#6f737a" stroke-width="1.9" stroke-linecap="round" stroke-linejoin="round"/></svg>
<svg style="left:1120px;top:882px" width="10" height="17" viewBox="0 0 10 17" fill="none" ><path d="M1.2 1.2 L8.6 8.5 L1.2 15.8" stroke="#6f737a" stroke-width="1.9" stroke-linecap="round" stroke-linejoin="round"/></svg>
<svg style="left:1120px;top:970px" width="10" height="17" viewBox="0 0 10 17" fill="none" ><path d="M1.2 1.2 L8.6 8.5 L1.2 15.8" stroke="#6f737a" stroke-width="1.9" stroke-linecap="round" stroke-linejoin="round"/></svg>
<svg style="left:1120px;top:1058px" width="10" height="17" viewBox="0 0 10 17" fill="none" ><path d="M1.2 1.2 L8.6 8.5 L1.2 15.8" stroke="#6f737a" stroke-width="1.9" stroke-linecap="round" stroke-linejoin="round"/></svg>
<svg style="left:1120px;top:1146px" width="10" height="17" viewBox="0 0 10 17" fill="none" ><path d="M1.2 1.2 L8.6 8.5 L1.2 15.8" stroke="#6f737a" stroke-width="1.9" stroke-linecap="round" stroke-linejoin="round"/></svg>
<svg style="left:3776px;top:96px" width="48" height="48" viewBox="3776 96 48 48" fill="none"><path d="M3786 132 L3790 125 V115 Q3790 105.5 3800 105.5 Q3810 105.5 3810 115 V125 L3814 132 Q3815 133.5 3813 133.5 H3787 Q3785 133.5 3786 132 Z" stroke="#ced0d6" stroke-width="3" stroke-linecap="round" stroke-linejoin="round"/><path d="M3795.5 136.5 H3804.5 Q3803 140 3800 140 Q3797 140 3795.5 136.5 Z" fill="#ced0d6"/></svg>
<svg style="left:3776px;top:178px" width="48" height="48" viewBox="3776 178 48 48" fill="none"><path d="M3786 189 Q3794 185 3803 187 Q3815 190 3815 200 Q3815 208 3806 209.5 Q3799 210 3796.5 205 Q3795 200 3799.5 198.5 Q3803.5 198 3804 201.5 M3813 215 Q3806 218 3798 217 Q3785 215 3784.5 203 Q3784.5 193 3793 190.5" stroke="#ced0d6" stroke-width="3" stroke-linecap="round" stroke-linejoin="round"/></svg>
<svg style="left:3776px;top:258px" width="48" height="48" viewBox="3776 258 48 48" fill="none"><ellipse cx="3800" cy="272" rx="15" ry="6.2" stroke="#ced0d6" stroke-width="3"/><path d="M3785 272 V292 Q3785 298.5 3800 298.5 Q3815 298.5 3815 292 V272 M3785 279.5 Q3785 285.5 3800 285.5 Q3815 285.5 3815 279.5 M3785 286 Q3785 292 3800 292 Q3815 292 3815 286" stroke="#ced0d6" stroke-width="3" stroke-linecap="round" stroke-linejoin="round"/></svg>
<svg style="left:3776px;top:340px" width="48" height="44" viewBox="3776 340 48 44" fill="none"><path d="M3784 373.5 L3789 351 M3787.5 358 Q3791 350.5 3797 350.5 Q3803.5 350.5 3802 357 L3798 373.5 M3801 357.5 Q3804 350.5 3810 350.5 Q3816.5 350.5 3815 357 L3811 373.5" stroke="#ced0d6" stroke-width="3.6" stroke-linecap="round" stroke-linejoin="round"/></svg>
<svg style="left:3730px;top:166px" width="26" height="26" viewBox="0 0 26 26" fill="none" ><path d="M13 2 L24.5 23 H1.5 Z" fill="#c29e4a" stroke="#c29e4a" stroke-width="2" stroke-linejoin="round"/><path d="M13 9 V16" stroke="#1e1f22" stroke-width="2.4" stroke-linecap="round"/><circle cx="13" cy="20" r="1.4" fill="#1e1f22"/></svg>
<div class="abs" style="left:3730px;top:415px;width:27px;height:4px;background:#5a7a62"></div>
<svg style="left:24px;top:2116px" width="26" height="26" viewBox="24 2116 26 26" fill="none"><rect x="29" y="2123" width="14" height="14" rx="3.5" fill="#25324d" stroke="#548af7" stroke-width="2"/></svg>
<div class="t" style="left:52px;top:2105px;color:#a8abb0;font-size:27.5px">MyWebApp</div>
<div class="t" style="left:245px;top:2105px;color:#a8abb0;font-size:27.5px">src</div>
<div class="t" style="left:331px;top:2105px;color:#a8abb0;font-size:27.5px">main</div>
<div class="t" style="left:438px;top:2105px;color:#a8abb0;font-size:27.5px">java</div>
<div class="t" style="left:536px;top:2105px;color:#a8abb0;font-size:27.5px">com</div>
<div class="t" style="left:638px;top:2105px;color:#a8abb0;font-size:27.5px">jetbrains</div>
<div class="t" style="left:794px;top:2105px;color:#a8abb0;font-size:27.5px">MyWebApp</div>
<div class="t" style="left:1027px;top:2105px;color:#a8abb0;font-size:27.5px">Person</div>
<svg style="left:215px;top:2121px" width="10" height="16" viewBox="0 0 10 16" fill="none" ><path d="M1.2 1.2 L8.6 8.0 L1.2 14.8" stroke="#9a9da3" stroke-width="1.9" stroke-linecap="round" stroke-linejoin="round"/></svg>
<svg style="left:300px;top:2121px" width="10" height="16" viewBox="0 0 10 16" fill="none" ><path d="M1.2 1.2 L8.6 8.0 L1.2 14.8" stroke="#9a9da3" stroke-width="1.9" stroke-linecap="round" stroke-linejoin="round"/></svg>
<svg style="left:408px;top:2121px" width="10" height="16" viewBox="0 0 10 16" fill="none" ><path d="M1.2 1.2 L8.6 8.0 L1.2 14.8" stroke="#9a9da3" stroke-width="1.9" stroke-linecap="round" stroke-linejoin="round"/></svg>
<svg style="left:507px;top:2121px" width="10" height="16" viewBox="0 0 10 16" fill="none" ><path d="M1.2 1.2 L8.6 8.0 L1.2 14.8" stroke="#9a9da3" stroke-width="1.9" stroke-linecap="round" stroke-linejoin="round"/></svg>
<svg style="left:608px;top:2121px" width="10" height="16" viewBox="0 0 10 16" fill="none" ><path d="M1.2 1.2 L8.6 8.0 L1.2 14.8" stroke="#9a9da3" stroke-width="1.9" stroke-linecap="round" stroke-linejoin="round"/></svg>
<svg style="left:764px;top:2121px" width="10" height="16" viewBox="0 0 10 16" fill="none" ><path d="M1.2 1.2 L8.6 8.0 L1.2 14.8" stroke="#9a9da3" stroke-width="1.9" stroke-linecap="round" stroke-linejoin="round"/></svg>
<svg style="left:958px;top:2121px" width="10" height="16" viewBox="0 0 10 16" fill="none" ><path d="M1.2 1.2 L8.6 8.0 L1.2 14.8" stroke="#9a9da3" stroke-width="1.9" stroke-linecap="round" stroke-linejoin="round"/></svg>
<svg style="left:986px;top:2112px" width="32" height="32" viewBox="0 0 16.0 16.0" fill="none" ><circle cx="8" cy="8" r="6.5" stroke="#548af7" fill="#25324d" stroke-width="1"/><path d="M10.9 5.6 A3.4 3.4 0 1 0 10.9 10.4" stroke="#548af7" stroke-width="0.85" fill="none"/></svg>
<svg style="left:3170px;top:2112px" width="32" height="36" viewBox="3170 2112 32 36" fill="none"><path d="M3186 2117.5 L3194.5 2126 H3190.5 L3195.5 2131.5 H3191.5 L3195.5 2137.5 H3176.5 L3180.5 2131.5 H3176.5 L3181.5 2126 H3177.5 Z" fill="#43454a" stroke="#ced0d6" stroke-width="2" stroke-linecap="round" stroke-linejoin="round"/><path d="M3186 2138 V2143.5" stroke="#ced0d6" stroke-width="4"/></svg>
<div class="t" style="left:3235px;top:2105px;color:#a8abb0;font-size:27.5px">8:14</div>
<svg style="left:3316px;top:2112px" width="36" height="36" viewBox="3316 2112 36 36" fill="none"><path d="M3324 2119.5 Q3332 2116 3339 2119 Q3346 2123 3344.5 2130 Q3342.5 2135 3336 2134.5 Q3331 2134 3330.5 2129.5 Q3331 2126 3334.5 2126.5 M3339.5 2141 Q3333 2143 3328 2141 Q3322.5 2138.5 3322.5 2131 Q3323 2125 3328 2123" stroke="#ced0d6" stroke-width="2" stroke-linecap="round" stroke-linejoin="round"/></svg>
<svg style="left:3380px;top:2112px" width="36" height="36" viewBox="3380 2112 36 36" fill="none"><path d="M3409.5 2118.5 Q3410 2131 3405 2138 Q3400 2144 3393.5 2143.5 Q3385 2142.5 3385 2133 Q3385.5 2124 3393 2120.5 Q3399 2118 3409.5 2118.5 Z" stroke="#ced0d6" stroke-width="2" stroke-linecap="round" stroke-linejoin="round"/></svg>
<div class="t" style="left:3447px;top:2105px;color:#a8abb0;font-size:27.5px">LF</div>
<div class="t" style="left:3509px;top:2105px;color:#a8abb0;font-size:27.5px">UTF-8</div>
<div class="t" style="left:3629px;top:2105px;color:#a8abb0;font-size:27.5px">4 spaces</div>
<svg style="left:3772px;top:2112px" width="36" height="36" viewBox="3772 2112 36 36" fill="none"><rect x="3779" y="2127" width="18" height="14.5" rx="3.5" stroke="#ced0d6" stroke-width="2" stroke-linecap="round" stroke-linejoin="round"/><path d="M3793 2126.5 V2124 Q3793 2118.5 3798 2118.5 Q3803 2118.5 3803 2124 V2127.5" stroke="#ced0d6" stroke-width="2" stroke-linecap="round" stroke-linejoin="round"/><path d="M3788 2131.5 V2136.5" stroke="#ced0d6" stroke-width="2" stroke-linecap="round" stroke-linejoin="round"/></svg></body></html>
